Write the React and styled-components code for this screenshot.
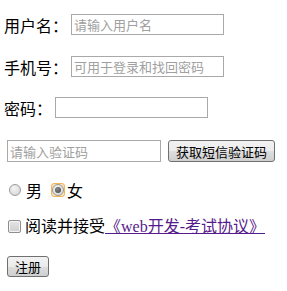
import React from 'react';
import styled, { createGlobalStyle } from 'styled-components';

const GlobalStyle = createGlobalStyle`
  html, body {
    margin: 0;
    padding: 0;
    background: #ffffff;
  }
  body {
    font-family: "Noto Sans CJK SC", "Liberation Sans", sans-serif;
    color: #000;
  }
`;

const Form = styled.form`
  display: flex;
  flex-direction: column;
  padding: 0 0 0 4px;
  width: 287px;
  height: 291px;
  box-sizing: border-box;
`;

const Row = styled.div`
  display: flex;
  align-items: center;
  height: ${p => p.$h || 21}px;
  margin-top: ${p => p.$top}px;
`;

const Label = styled.span`
  font-size: 16px;
  line-height: 16px;
  width: ${p => p.$w}px;
  flex-shrink: 0;
  white-space: nowrap;
`;

const TextInput = styled.input`
  box-sizing: border-box;
  width: ${p => p.$w}px;
  height: ${p => p.$h || 21}px;
  margin-left: ${p => p.$ml || 0}px;
  border: 1px solid #a9a9a9;
  padding: 0 2px;
  font-family: "Noto Sans CJK SC", sans-serif;
  font-size: 13px;
  outline: none;
  background: #fff;

  &::placeholder {
    color: #a0a0a0;
  }
`;

const Button = styled.button`
  box-sizing: border-box;
  width: ${p => p.$w}px;
  height: ${p => p.$h}px;
  margin-left: ${p => p.$ml || 0}px;
  padding: 0;
  border: 1px solid #707070;
  border-radius: 3px;
  background: linear-gradient(#f2f2f2 0%, #ebebeb 50%, #dddddd 51%, #cfcfcf 100%);
  font-family: "Noto Sans CJK SC", sans-serif;
  font-size: 13px;
  line-height: 1;
  color: #000;
`;

const Radio = styled.span`
  box-sizing: border-box;
  display: inline-flex;
  align-items: center;
  justify-content: center;
  width: ${p => (p.$focus ? 14 : 13)}px;
  height: ${p => (p.$focus ? 14 : 13)}px;
  margin-left: ${p => p.$ml}px;
  border-radius: 3px;
  border: ${p => (p.$focus ? '1px solid #f0b45a' : 'none')};
  background: ${p => (p.$focus ? '#fbe3b5' : 'transparent')};
`;

const RadioDot = styled.span`
  box-sizing: border-box;
  width: 12px;
  height: 12px;
  border-radius: 50%;
  border: 1px solid #9a9a9a;
  background: radial-gradient(circle at 40% 35%, #f4f4f4, #d2d2d2);
  display: flex;
  align-items: center;
  justify-content: center;

  &::after {
    content: '';
    display: ${p => (p.$checked ? 'block' : 'none')};
    width: 6px;
    height: 6px;
    border-radius: 50%;
    background: radial-gradient(circle at 40% 35%, #8a8a8a, #3c3c3c);
  }
`;

const Choice = styled.span`
  font-size: 16px;
  line-height: 16px;
  margin-left: ${p => p.$ml}px;
`;

const Check = styled.span`
  box-sizing: border-box;
  width: 13px;
  height: 13px;
  margin-left: 4px;
  border: 1px solid #8e8e8e;
  border-radius: 2px;
  background: linear-gradient(#e4e4e4, #cfcfcf);
  box-shadow: inset 0 0 0 1px #f4f4f4;
`;

const Agree = styled.span`
  font-size: 16px;
  line-height: 16px;
  margin-left: 4px;
  white-space: nowrap;
`;

const Link = styled.a`
  font-family: "Liberation Serif", "Noto Sans CJK SC", serif;
  font-size: 16px;
  color: #551a8b;
  text-decoration: underline;
`;

export default function App() {
  return (
    <>
      <GlobalStyle />
      <Form onSubmit={e => e.preventDefault()}>
        <Row $top={14}>
          <Label $w={67}>用户名：</Label>
          <TextInput $w={153} placeholder="请输入用户名" />
        </Row>
        <Row $top={21}>
          <Label $w={67}>手机号：</Label>
          <TextInput $w={153} placeholder="可用于登录和找回密码" />
        </Row>
        <Row $top={20}>
          <Label $w={51}>密码：</Label>
          <TextInput $w={153} type="password" />
        </Row>
        <Row $top={22} $h={22}>
          <TextInput $w={154} $h={22} $ml={3} placeholder="请输入验证码" />
          <Button type="button" $w={107} $h={22} $ml={7}>获取短信验证码</Button>
        </Row>
        <Row $top={20} $h={16}>
          <Radio $ml={4}><RadioDot /></Radio>
          <Choice $ml={5}>男</Choice>
          <Radio $ml={9} $focus><RadioDot $checked /></Radio>
          <Choice $ml={2}>女</Choice>
        </Row>
        <Row $top={19} $h={18}>
          <Check />
          <Agree>阅读并接受<Link href="#">《web开发-考试协议》</Link></Agree>
        </Row>
        <Row $top={21} $h={21}>
          <Button type="button" $w={42} $h={21} $ml={3}>注册</Button>
        </Row>
      </Form>
    </>
  );
}
